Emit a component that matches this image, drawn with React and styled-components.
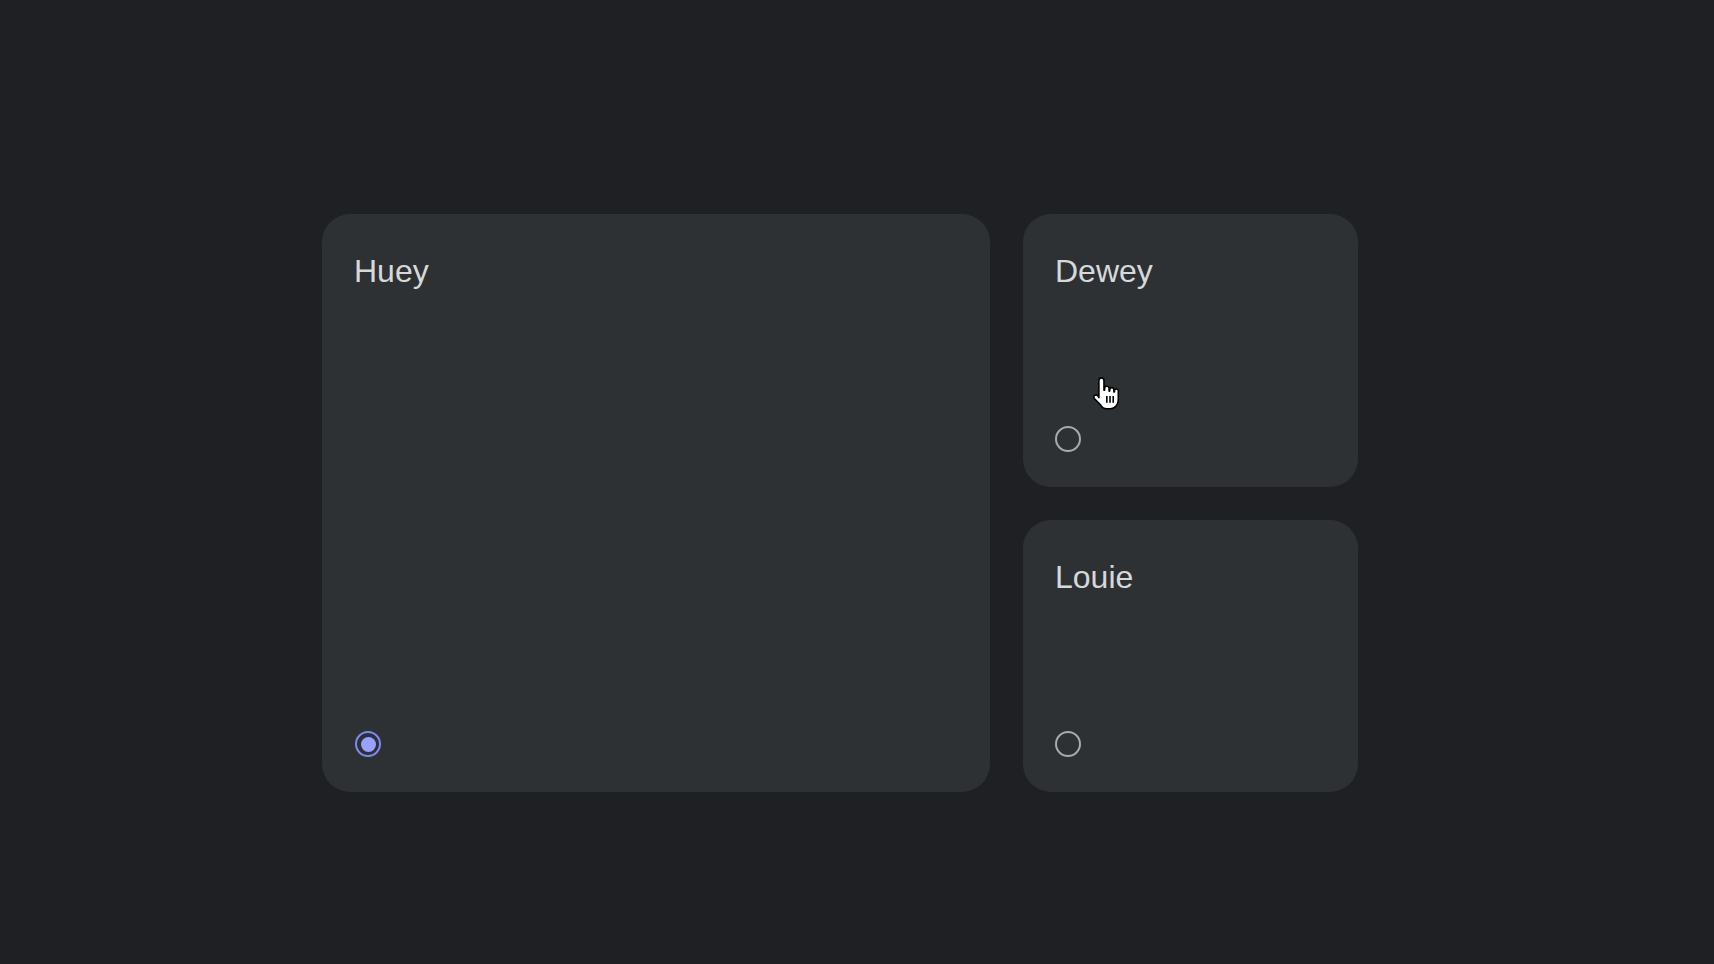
import React, { useState } from "react";
import styled, { createGlobalStyle } from "styled-components";

const GlobalStyle = createGlobalStyle`
  html, body {
    margin: 0;
    padding: 0;
    background: #1f2023;
  }
  body {
    font-family: "Liberation Sans", Arial, Helvetica, sans-serif;
    min-height: 964px;
  }
`;

const Page = styled.main`
  box-sizing: border-box;
  width: 100%;
  min-height: 964px;
  padding: 214px 0 0 322px;
  background: #1f2023;
`;

const Grid = styled.div`
  display: grid;
  grid-template-columns: 668px 335px;
  grid-template-rows: 272.5px 272.5px;
  column-gap: 33px;
  row-gap: 33px;
`;

const Card = styled.label`
  position: relative;
  box-sizing: border-box;
  display: flex;
  flex-direction: column;
  justify-content: space-between;
  align-items: flex-start;
  padding: 33px 32px 35px 32px;
  border-radius: 28px;
  background: #2d3134;
  grid-row: ${(p) => (p.$tall ? "span 2" : "auto")};
  cursor: pointer;
`;

const Title = styled.h2`
  margin: 0;
  font-size: 32px;
  line-height: 48px;
  font-weight: 400;
  color: #d6d8da;
  letter-spacing: 0;
`;

const Radio = styled.span`
  box-sizing: border-box;
  display: flex;
  align-items: center;
  justify-content: center;
  width: 26px;
  height: 26px;
  margin-left: ${(p) => (p.$checked ? "1px" : "0")};
  border-radius: 50%;
  border: 2px solid ${(p) => (p.$checked ? "#7f88f4" : "#a8aaad")};

  &::after {
    content: "";
    width: 15px;
    height: 15px;
    border-radius: 50%;
    background: ${(p) => (p.$checked ? "#98a1ff" : "transparent")};
  }
`;

const Cursor = styled.svg`
  position: absolute;
  left: 68px;
  top: 162px;
  width: 32px;
  height: 35px;
  pointer-events: none;
`;

function HandCursor() {
  return (
    <Cursor viewBox="0 0 20 22">
      <path
        d="M6.5 1.2c1 0 1.6.7 1.6 1.7V9h.4V7.8c0-.9.6-1.4 1.4-1.4s1.4.5 1.4 1.4V9.5h.4V8.6c0-.8.6-1.3 1.3-1.3s1.3.5 1.3 1.3V10h.4V9.4c0-.7.6-1.2 1.2-1.2s1.2.5 1.2 1.2V15c0 3-2 5.6-5 5.6H9.9c-2 0-3.1-1-4-2.5L2 14.1c-.5-.8-.3-1.6.4-2 .7-.4 1.5-.1 2 .6l.5.9V2.9c0-1 .6-1.7 1.6-1.7z"
        fill="#fff"
        stroke="#000"
        strokeWidth="1"
        strokeLinejoin="round"
      />
      <path d="M9.9 12.6v4.2M11.9 12.6v4.2M13.9 12.6v4.2" stroke="#000" strokeWidth="1" />
    </Cursor>
  );
}

const items = [
  { id: "huey", name: "Huey", tall: true },
  { id: "dewey", name: "Dewey", tall: false, cursor: true },
  { id: "louie", name: "Louie", tall: false },
];

export default function App() {
  const [selected, setSelected] = useState("huey");
  return (
    <>
      <GlobalStyle />
      <Page>
        <Grid role="radiogroup">
          {items.map((it) => (
            <Card key={it.id} $tall={it.tall} onClick={() => setSelected(it.id)}>
              <Title>{it.name}</Title>
              <Radio role="radio" aria-checked={selected === it.id} $checked={selected === it.id} />
              {it.cursor && <HandCursor />}
            </Card>
          ))}
        </Grid>
      </Page>
    </>
  );
}
